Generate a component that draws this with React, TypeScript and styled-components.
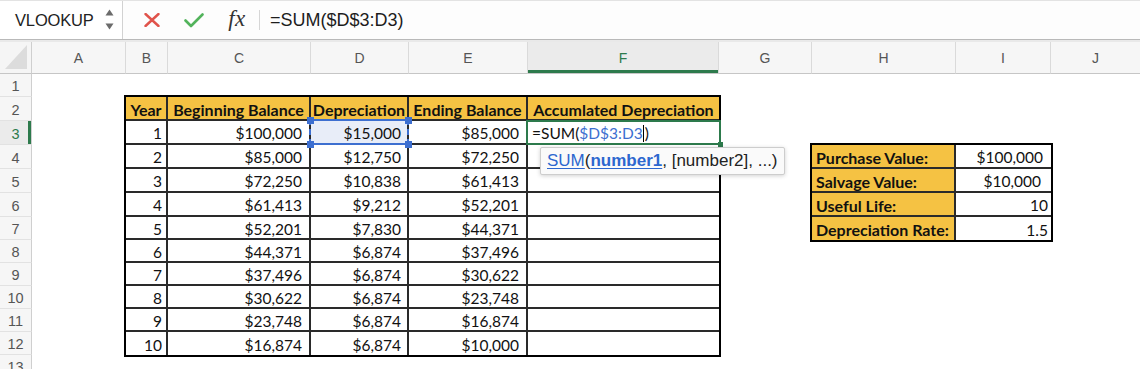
import React from "react";
import styled, { createGlobalStyle, css } from "styled-components";

const GREEN = "#2d7a4c";
const BLUE = "#3d6fd0";
const YELLOW = "#f5c243";
const LINE = "#2a2a2a";

const COL_WIDTHS = [94, 42, 143, 98, 119, 191, 93, 144, 95, 90];
const COL_NAMES = ["A", "B", "C", "D", "E", "F", "G", "H", "I", "J"];
const ROW_HEIGHTS = [23, 24, 24, 24, 24, 24, 23, 23, 23, 23, 23, 23, 23];

const GlobalStyle = createGlobalStyle`
  *, *::before, *::after { box-sizing: border-box; }
  html, body { margin: 0; padding: 0; background: #fff; }
  body {
    width: 1140px;
    height: 369px;
    overflow: hidden;
    font-family: "Liberation Sans", Arial, sans-serif;
  }
`;

const Window = styled.div`
  width: 1140px;
  height: 369px;
  overflow: hidden;
  background: #fff;
`;

/* ---------- Formula bar ---------- */

const FormulaBar = styled.div`
  display: flex;
  align-items: stretch;
  height: 40px;
  border-top: 1px solid #e3e3e3;
  border-bottom: 1px solid #b9b9b9;
  background: #fdfdfd;
`;

const NameBox = styled.div`
  width: 123px;
  flex: none;
  display: flex;
  align-items: center;
  justify-content: space-between;
  padding: 0 8px 0 15px;
  background: #fff;
  border-right: 1px solid #d2d2d2;
`;

const NameText = styled.span`
  font-size: 16.5px;
  color: #222;
  letter-spacing: -0.15px;
`;

const Actions = styled.div`
  display: flex;
  align-items: center;
  padding-left: 8px;
`;

const ActionSlot = styled.div<{ $w: number }>`
  width: ${(p) => p.$w}px;
  display: flex;
  align-items: center;
  justify-content: center;
`;

const Fx = styled.span`
  font-family: "Liberation Serif", "Times New Roman", serif;
  font-style: italic;
  font-size: 23px;
  color: #333;
  letter-spacing: 0.5px;
  margin-top: -2px;
`;

const Separator = styled.div`
  width: 1px;
  align-self: center;
  height: 20px;
  background: #d6d6d6;
`;

const FormulaInput = styled.div`
  display: flex;
  align-items: center;
  margin-left: 10px;
  font-size: 18px;
  color: #1d1d1d;
`;

/* ---------- Sheet ---------- */

const Sheet = styled.div`
  position: relative;
  display: grid;
  grid-template-columns: 32px ${COL_WIDTHS.map((w) => `${w}px`).join(" ")};
  grid-template-rows: 32px ${ROW_HEIGHTS.map((h) => `${h}px`).join(" ")};
  border-top: 2px solid #e9e9e9;
`;

const Corner = styled.div`
  grid-column: 1;
  grid-row: 1;
  display: flex;
  align-items: flex-end;
  justify-content: flex-end;
  padding: 0 4px 4px 0;
  background: #f5f5f5;
  border-right: 1px solid #cfcfcf;
  border-bottom: 1px solid #c6c6c6;
`;

const ColHeader = styled.div<{ $col: number; $active?: boolean }>`
  grid-row: 1;
  grid-column: ${(p) => p.$col};
  display: flex;
  align-items: center;
  justify-content: center;
  font-size: 14px;
  color: #555;
  background: #f6f6f6;
  border-right: 1px solid #dadada;
  border-bottom: 1px solid #c6c6c6;
  ${(p) =>
    p.$active &&
    css`
      color: ${GREEN};
      background: #ebebeb;
      box-shadow: inset 0 -3px 0 ${GREEN};
    `}
`;

const RowHeader = styled.div<{ $row: number; $active?: boolean }>`
  grid-column: 1;
  grid-row: ${(p) => p.$row + 1};
  display: flex;
  align-items: center;
  justify-content: center;
  padding-top: 2px;
  font-size: 14.5px;
  color: #555;
  background: #f6f6f6;
  border-right: 1px solid #cfcfcf;
  border-bottom: 1px solid #e2e2e2;
  ${(p) =>
    p.$active &&
    css`
      color: ${GREEN};
      background: #ebebeb;
      box-shadow: inset -3px 0 0 ${GREEN};
    `}
`;

const Table = styled.div<{ $cols: string; $rows: string; $area: string }>`
  grid-area: ${(p) => p.$area};
  display: grid;
  grid-template-columns: ${(p) => p.$cols};
  grid-template-rows: ${(p) => p.$rows};
  outline: 3px solid #000;
  outline-offset: -1px;
  font-family: Lato, "Liberation Sans", Arial, sans-serif;
  font-size: 15.5px;
  color: #111;
  position: relative;
`;

type Align = "left" | "center" | "right";

const Cell = styled.div<{
  $align?: Align;
  $header?: boolean;
  $lastCol?: boolean;
  $lastRow?: boolean;
  $pad?: number;
}>`
  position: relative;
  display: flex;
  align-items: center;
  justify-content: ${(p) =>
    p.$align === "left" ? "flex-start" : p.$align === "center" ? "center" : "flex-end"};
  padding: 2px ${(p) => (p.$align === "right" ? p.$pad ?? 6 : 0)}px 0
    ${(p) => (p.$align === "left" ? p.$pad ?? 4 : 0)}px;
  white-space: nowrap;
  background: ${(p) => (p.$header ? YELLOW : "#fff")};
  font-weight: ${(p) => (p.$header ? 700 : 400)};
  font-size: ${(p) => (p.$header ? "16px" : "15.5px")};
  border-right: ${(p) => (p.$lastCol ? "none" : `2px solid ${LINE}`)};
  border-bottom: ${(p) => (p.$lastRow ? "none" : `2px solid ${LINE}`)};
`;

const RefCell = styled(Cell)`
  background: #e8edf8;
`;

const RefFrame = styled.div`
  position: absolute;
  top: -2px;
  left: -2px;
  right: -2px;
  bottom: -2px;
  border: 2px solid ${BLUE};
  border-style: solid dashed;
  pointer-events: none;
  z-index: 2;
`;

const Handle = styled.span<{ $v: "top" | "bottom"; $h: "left" | "right"; $size: number; $color: string }>`
  position: absolute;
  width: ${(p) => p.$size}px;
  height: ${(p) => p.$size}px;
  background: ${(p) => p.$color};
  ${(p) => p.$v}: ${(p) => -Math.ceil(p.$size / 2) - 0.5}px;
  ${(p) => p.$h}: ${(p) => -Math.ceil(p.$size / 2) - 0.5}px;
`;

const EditCell = styled(Cell)`
  z-index: 3;
  overflow: visible;
`;

const EditFrame = styled.div`
  position: absolute;
  top: -1px;
  left: -2px;
  right: -2px;
  bottom: -2px;
  border: 2px solid ${GREEN};
  pointer-events: none;
`;

const EditText = styled.span`
  color: #111;
`;

const RefText = styled.span`
  color: ${BLUE};
`;

const Caret = styled.span`
  display: inline-block;
  width: 1px;
  height: 17px;
  background: #000;
  vertical-align: -3px;
  margin: 0 0.5px;
`;

const Tooltip = styled.div`
  position: absolute;
  left: 12px;
  top: 26px;
  height: 28px;
  display: flex;
  align-items: center;
  padding: 0 6px;
  background: #fafafa;
  border: 1px solid #cdcdcd;
  border-radius: 2px;
  box-shadow: 0 1px 4px rgba(0, 0, 0, 0.18);
  font-family: "Liberation Sans", Arial, sans-serif;
  font-size: 17px;
  font-weight: 400;
  color: #222;
  white-space: nowrap;
`;

const TipLink = styled.span<{ $bold?: boolean }>`
  color: #2d67cf;
  text-decoration: underline;
  text-underline-offset: 2px;
  font-weight: ${(p) => (p.$bold ? 700 : 400)};
`;

/* ---------- Data ---------- */

const HEADERS = ["Year", "Beginning Balance", "Depreciation", "Ending Balance", "Accumlated Depreciation"];

const ROWS: [string, string, string, string][] = [
  ["1", "$100,000", "$15,000", "$85,000"],
  ["2", "$85,000", "$12,750", "$72,250"],
  ["3", "$72,250", "$10,838", "$61,413"],
  ["4", "$61,413", "$9,212", "$52,201"],
  ["5", "$52,201", "$7,830", "$44,371"],
  ["6", "$44,371", "$6,874", "$37,496"],
  ["7", "$37,496", "$6,874", "$30,622"],
  ["8", "$30,622", "$6,874", "$23,748"],
  ["9", "$23,748", "$6,874", "$16,874"],
  ["10", "$16,874", "$6,874", "$10,000"],
];

const INPUTS: [string, string, number][] = [
  ["Purchase Value:", "$100,000", 8],
  ["Salvage Value:", "$10,000", 10],
  ["Useful Life:", "10", 3],
  ["Depreciation Rate:", "1.5", 3],
];

/* ---------- Icons ---------- */

const SpinnerIcon = () => (
  <svg width="9" height="24" viewBox="0 0 9 24">
    <path d="M4.5 1.5 L8.5 7.5 L0.5 7.5 Z" fill="#6b6b6b" />
    <path d="M4.5 21.5 L8.5 15.5 L0.5 15.5 Z" fill="#6b6b6b" />
  </svg>
);

const CancelIcon = () => (
  <svg width="16" height="14" viewBox="0 0 16 14">
    <path d="M1.5 1 L14.5 13 M14.5 1 L1.5 13" stroke="#e0534b" strokeWidth="2.4" strokeLinecap="round" />
  </svg>
);

const EnterIcon = () => (
  <svg width="20" height="15" viewBox="0 0 20 15">
    <path d="M1.5 7.5 L7 13 L18.5 1.5" stroke="#52b35b" strokeWidth="2.6" fill="none" strokeLinecap="round" strokeLinejoin="round" />
  </svg>
);

const CornerTriangle = () => (
  <svg width="22" height="24" viewBox="0 0 22 24">
    <path d="M22 0 L22 24 L0 24 Z" fill="#dcdcdc" />
  </svg>
);

/* ---------- App ---------- */

export default function App() {
  const mainRows = ROW_HEIGHTS.slice(1, 12).map((h) => `${h}px`).join(" ");
  const inputRows = ROW_HEIGHTS.slice(3, 7).map((h) => `${h}px`).join(" ");

  return (
    <>
      <GlobalStyle />
      <Window>
        <FormulaBar>
          <NameBox>
            <NameText>VLOOKUP</NameText>
            <SpinnerIcon />
          </NameBox>
          <Actions>
            <ActionSlot $w={42}>
              <CancelIcon />
            </ActionSlot>
            <ActionSlot $w={42}>
              <EnterIcon />
            </ActionSlot>
            <ActionSlot $w={44}>
              <Fx>fx</Fx>
            </ActionSlot>
          </Actions>
          <Separator />
          <FormulaInput>=SUM($D$3:D3)</FormulaInput>
        </FormulaBar>

        <Sheet>
          <Corner>
            <CornerTriangle />
          </Corner>
          {COL_NAMES.map((name, i) => (
            <ColHeader key={name} $col={i + 2} $active={name === "F"}>
              {name}
            </ColHeader>
          ))}
          {ROW_HEIGHTS.map((_, i) => (
            <RowHeader key={i} $row={i + 1} $active={i + 1 === 3}>
              {i + 1}
            </RowHeader>
          ))}

          <Table $area="3 / 3 / 14 / 8" $cols="42px 143px 98px 119px 191px" $rows={mainRows}>
            {HEADERS.map((h, c) => (
              <Cell key={h} $header $align="center" $lastCol={c === 4}>
                {h}
              </Cell>
            ))}
            {ROWS.map((row, r) => {
              const last = r === ROWS.length - 1;
              return (
                <React.Fragment key={r}>
                  <Cell $align="right" $pad={4} $lastRow={last}>
                    {row[0]}
                  </Cell>
                  <Cell $align="right" $pad={7} $lastRow={last}>
                    {row[1]}
                  </Cell>
                  {r === 0 ? (
                    <RefCell $align="right" $pad={6}>
                      {row[2]}
                      <RefFrame>
                        <Handle $v="top" $h="left" $size={7} $color={BLUE} />
                        <Handle $v="top" $h="right" $size={7} $color={BLUE} />
                        <Handle $v="bottom" $h="left" $size={7} $color={BLUE} />
                        <Handle $v="bottom" $h="right" $size={7} $color={BLUE} />
                      </RefFrame>
                    </RefCell>
                  ) : (
                    <Cell $align="right" $pad={6} $lastRow={last}>
                      {row[2]}
                    </Cell>
                  )}
                  <Cell $align="right" $pad={7} $lastRow={last}>
                    {row[3]}
                  </Cell>
                  {r === 0 ? (
                    <EditCell $align="left" $pad={4} $lastCol>
                      <EditText>=SUM(</EditText>
                      <RefText>$D$3:D3</RefText>
                      <Caret />
                      <EditText>)</EditText>
                      <EditFrame>
                        <Handle $v="bottom" $h="right" $size={5} $color={GREEN} />
                      </EditFrame>
                      <Tooltip>
                        <TipLink>SUM</TipLink>(<TipLink $bold>number1</TipLink>, [number2], ...)
                      </Tooltip>
                    </EditCell>
                  ) : (
                    <Cell $align="right" $lastCol $lastRow={last} />
                  )}
                </React.Fragment>
              );
            })}
          </Table>

          <Table $area="5 / 9 / 9 / 11" $cols="144px 95px" $rows={inputRows}>
            {INPUTS.map(([label, value, pad], r) => {
              const last = r === INPUTS.length - 1;
              return (
                <React.Fragment key={label}>
                  <Cell $header $align="left" $pad={4} $lastRow={last}>
                    {label}
                  </Cell>
                  <Cell $align="right" $pad={pad} $lastCol $lastRow={last}>
                    {value}
                  </Cell>
                </React.Fragment>
              );
            })}
          </Table>
        </Sheet>
      </Window>
    </>
  );
}
